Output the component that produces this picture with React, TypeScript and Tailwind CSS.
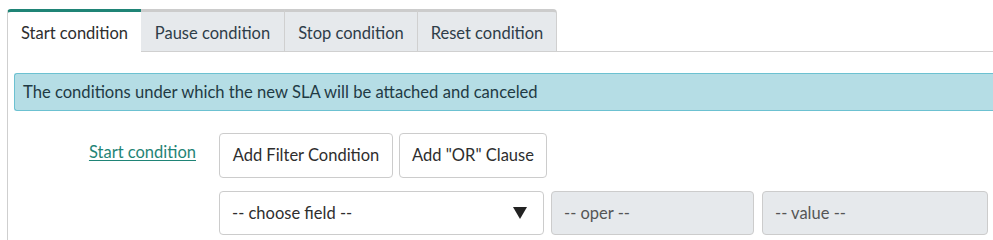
import React, { useState } from 'react'

const tabs = [
  { label: 'Start condition', w: 'w-[134px]' },
  { label: 'Pause condition', w: 'w-[144px]' },
  { label: 'Stop condition', w: 'w-[133px]' },
  { label: 'Reset condition', w: 'w-[139px]' },
]

export default function App() {
  const [active, setActive] = useState(0)

  return (
    <div
      className="h-[240px] w-[993px] overflow-hidden bg-white text-[#2e2e2e]"
      style={{ fontFamily: 'Lato, "Open Sans", sans-serif' }}
    >
      <div className="pl-[7px] pt-[9px]">
        {/* tabs */}
        <div className="flex h-[43px]">
          {tabs.map((t, i) => {
            const isActive = i === active
            const last = i === tabs.length - 1
            return (
              <div
                key={t.label}
                onClick={() => setActive(i)}
                className={
                  isActive
                    ? `flex h-[43px] cursor-pointer items-center justify-center rounded-tl-[4px] border-t-[3px] border-l border-t-[#1f8476] border-l-[#cfcfcf] bg-white pt-[3px] text-[16.5px] text-[#2e2e2e] ${t.w}`
                    : `flex h-[43px] cursor-pointer items-center justify-center border-t-[3px] border-r border-b border-t-[#cccccc] border-r-[#d0d0d0] border-b-[#d0d0d0] bg-[#e6e9ec] pt-[3px] text-[16.5px] text-[#2e3d49] ${t.w} ${
                        last ? 'rounded-tr-[4px]' : ''
                      }`
                }
              >
                {t.label}
              </div>
            )
          })}
          <div className="h-[43px] flex-1 border-b border-b-[#d0d0d0]" />
        </div>

        {/* panel */}
        <div className="h-[200px] border-l border-l-[#cfcfcf] pl-[6px] pt-[21px]">
          <div className="-mr-[4px] flex h-[38px] items-center rounded-l-[3px] border border-r-0 border-[#6cc1d1] bg-[#b5dde5] pl-[8px] text-[16.6px] text-[#1f3a44]">
            The conditions under which the new SLA will be attached and canceled
          </div>

          <div className="mt-[22px] flex">
            <div className="w-[205px] pt-[7px] text-right">
              <a href="#" className="mr-[23px] text-[16.5px] text-[#1f8476] underline underline-offset-2">
                Start condition
              </a>
            </div>
            <div className="flex flex-col gap-[13px]">
              <div className="flex gap-[6px]">
                <button className="h-[45px] w-[174px] rounded-[4px] border border-[#cccccc] bg-white text-[16.5px] text-[#2e2e2e]">
                  Add Filter Condition
                </button>
                <button className="h-[45px] w-[148px] rounded-[4px] border border-[#cccccc] bg-white text-[16.5px] text-[#2e2e2e]">
                  Add "OR" Clause
                </button>
              </div>
              <div className="flex">
                <div className="flex h-[44px] w-[325px] items-center justify-between rounded-[4px] border border-[#cccccc] bg-white pl-[12px] pr-[16px] text-[16.5px] text-[#2e2e2e]">
                  <span>-- choose field --</span>
                  <svg width="14" height="12" viewBox="0 0 14 12">
                    <path d="M0 0 H14 L7 12 Z" fill="#222" />
                  </svg>
                </div>
                <div className="ml-[7px] flex h-[44px] w-[203px] items-center rounded-[4px] border border-[#cccccc] bg-[#e6e9ec] pl-[12px] text-[16.5px] text-[#555]">
                  -- oper --
                </div>
                <div className="ml-[8px] flex h-[44px] w-[226px] items-center rounded-[4px] border border-[#cccccc] bg-[#e6e9ec] pl-[12px] text-[16.5px] text-[#555]">
                  -- value --
                </div>
              </div>
            </div>
          </div>
        </div>
      </div>
    </div>
  )
}
